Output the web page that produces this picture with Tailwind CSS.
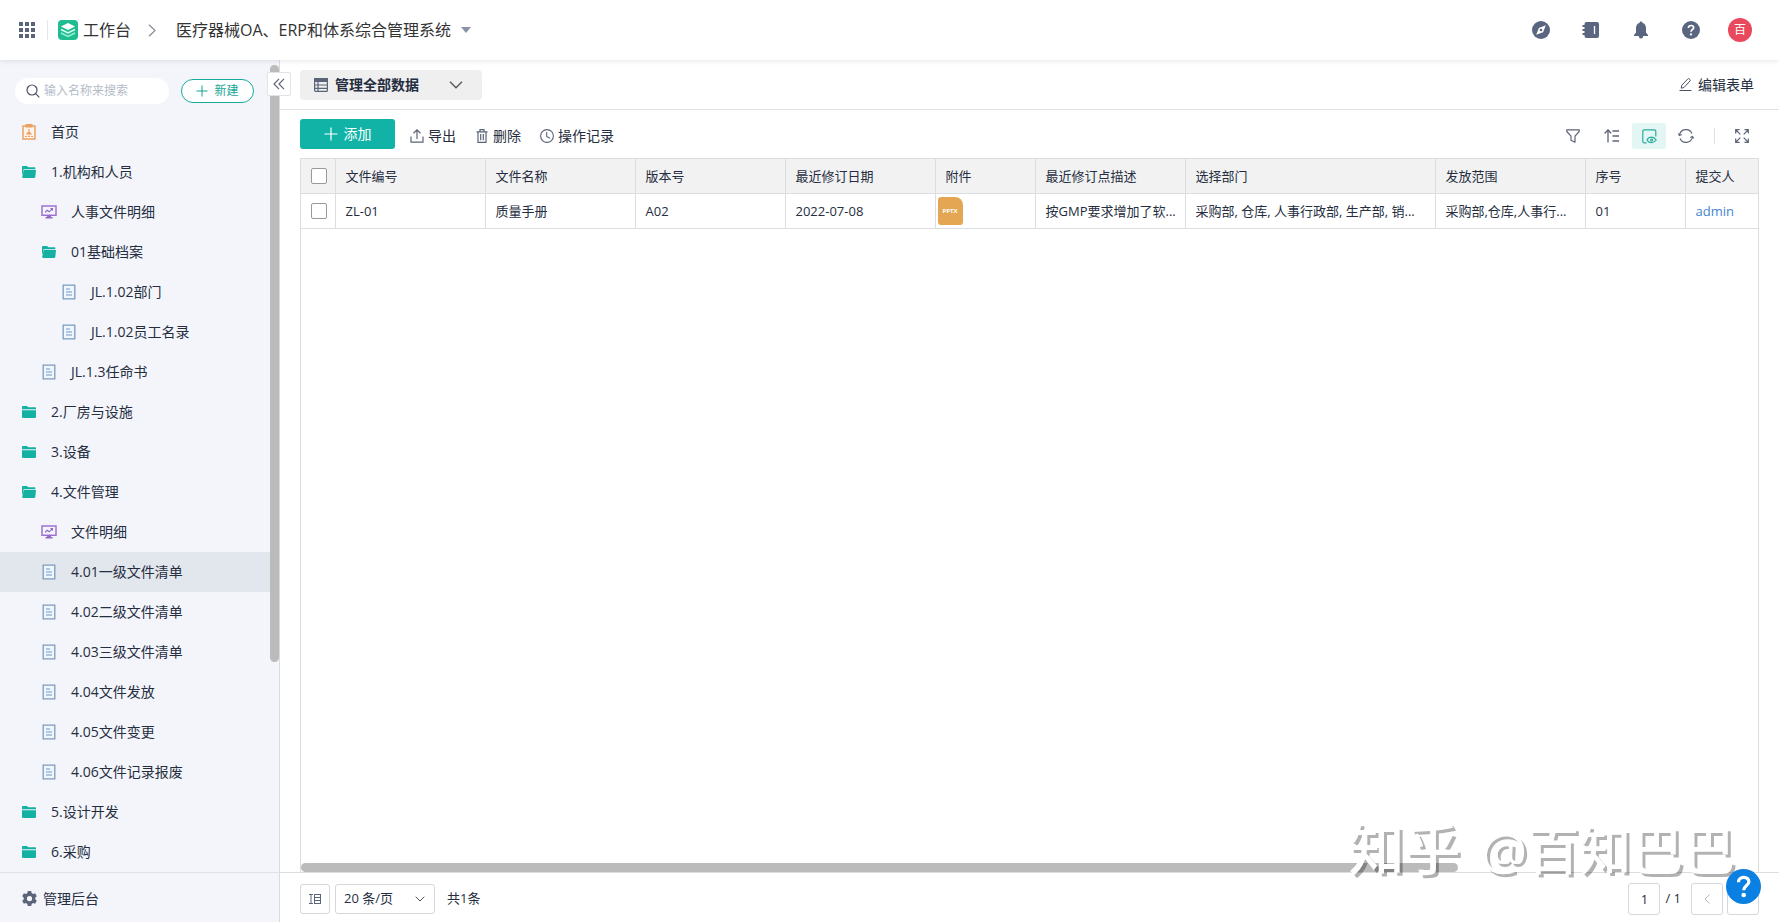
<!DOCTYPE html>
<html lang="zh-CN">
<head>
<meta charset="utf-8">
<title>医疗器械OA、ERP和体系综合管理系统</title>
<script src="https://cdn.jsdelivr.net/npm/@tailwindcss/browser@4"></script>
</head>
<body class="flex h-screen flex-col overflow-hidden bg-white font-['Open_Sans','Noto_Sans_CJK_SC',sans-serif] text-sm text-[#252d40]">

<svg class="hidden" aria-hidden="true">
  <symbol id="folder" viewBox="0 0 14 12"><path fill="#14b0a2" d="M0 1.2C0 .5.4 0 1 0h4l1.300 1.300h6.700c.6 0 1 .4 1 1v1H0zM0 4.300h14v6.500c0 .7-.4 1.200-1 1.200H1c-.6 0-1-.5-1-1.200z"/></symbol>
  <symbol id="folder-open" viewBox="0 0 14 12"><path fill="#14b0a2" d="M0 1.200C0 .5.4 0 1 0h4l1.300 1.300h6c.6 0 1 .4 1 1v1H1.500L.6 8 0 8z"/><path fill="#14b0a2" d="M1.700 4.100H14l-.7 6.700c0 .7-.4 1.200-1 1.200H1.200c-.6 0-1-.5-1-1.200z"/></symbol>
  <symbol id="doc" viewBox="0 0 14 16"><path fill="#eef5fb" stroke="#7d9cbd" stroke-width="1.300" d="M1.200 1.200h11.600v13.600H1.200z"/><path fill="none" stroke="#6f9cc9" stroke-width="1.200" d="M4 5h4M4 8h6M4 11h6"/></symbol>
  <symbol id="monitor" viewBox="0 0 16 14"><path fill="none" stroke="#a272d3" stroke-width="1.500" d="M1 1h14v9.200H1z"/><path fill="none" stroke="#8f63c4" stroke-width="1.100" d="M4 7.300l2.200-2 2 1.500 3-3M9.500 3.500h2v2"/><path fill="#9568cc" d="M6 10h4v2h1.500v1.500h-7V12H6z"/></symbol>
  <symbol id="plus" viewBox="0 0 14 14"><path fill="none" stroke="currentColor" stroke-width="1.200" d="M7 .5v13M.5 7h13"/></symbol>
  <symbol id="down" viewBox="0 0 14 8"><path fill="none" stroke="currentColor" stroke-width="1.300" d="M1 .8l6 6 6-6"/></symbol>
</svg>

<header class="relative z-10 flex h-15 shrink-0 items-center bg-white pr-[27px] pl-[19px] shadow-[0_1px_5px_rgba(0,0,0,0.1)]">
  <button aria-label="应用" class="mr-3"><svg class="size-4" viewBox="0 0 16 16" fill="#5b6478"><path d="M0 0h4v4H0zM6 0h4v4H6zM12 0h4v4h-4zM0 6h4v4H0zM6 6h4v4H6zM12 6h4v4h-4zM0 12h4v4H0zM6 12h4v4H6zM12 12h4v4h-4z"/></svg></button>
  <span class="mr-2.5 h-5 w-px bg-gray-200"></span>
  <svg class="mr-[5px] size-5" viewBox="0 0 20 20"><rect width="20" height="20" rx="4" fill="#20bd93"/><path fill="#fff" d="M10 3l7 3.500-7 3.500-7-3.500z"/><path fill="none" stroke="#d8fff1" stroke-width="1.500" d="M3 9.500l7 3.500 7-3.500"/><path fill="none" stroke="#9eeed4" stroke-width="1.500" d="M3 13l7 3.500 7-3.500"/></svg>
  <a href="#" class="text-base text-[#333]">工作台</a>
  <svg class="ml-[17px] mr-5 h-[13px] w-2" viewBox="0 0 8 13"><path fill="none" stroke="#8b909b" stroke-width="1.300" d="M1 .7l6 5.800-6 5.800"/></svg>
  <button class="flex items-center gap-2.5 text-base text-[#333]">医疗器械OA、ERP和体系综合管理系统
    <svg class="h-1.5 w-2.5" viewBox="0 0 10 6"><path fill="#8993a8" d="M0 0h10L5 6z"/></svg>
  </button>
  <div class="ml-auto flex items-center gap-8">
    <button aria-label="导航"><svg class="size-[18px]" viewBox="0 0 18 18"><circle cx="9" cy="9" r="9" fill="#5a6580"/><path fill="#fff" d="M13.800 4.200l-2.700 7-6.900 2.600 2.700-6.900z"/><circle cx="9" cy="9" r="1.300" fill="#5a6580"/></svg></button>
    <button aria-label="通讯录"><svg class="size-[18px]" viewBox="0 0 18 18"><rect x="2.500" y="1" width="14.500" height="16" rx="2" fill="#5a6580"/><path stroke="#5a6580" stroke-width="1.800" d="M.5 5h3M.5 9h3M.5 13h3"/><path stroke="#fff" stroke-width="1.300" d="M12.500 5v8"/></svg></button>
    <button aria-label="通知"><svg class="size-[18px]" viewBox="0 0 18 18"><path fill="#5a6580" d="M9 .5c.8 0 1.300.5 1.300 1.300C12.800 2.400 14 4.500 14 7v4.500l2 2.500v1H2v-1l2-2.500V7c0-2.500 1.200-4.600 3.700-5.200C7.700 1 8.200.5 9 .5zM6.800 15h4.400c0 1.700-1 2.500-2.200 2.500s-2.200-.8-2.200-2.500z"/></svg></button>
    <button aria-label="帮助"><svg class="size-[18px]" viewBox="0 0 18 18"><circle cx="9" cy="9" r="9" fill="#5a6580"/><path fill="none" stroke="#fff" stroke-width="1.700" d="M6.400 7c0-1.600 1.100-2.500 2.600-2.500s2.600.9 2.600 2.300c0 1.700-2.600 1.800-2.600 4"/><circle cx="9" cy="13.400" r="1.100" fill="#fff"/></svg></button>
    <button class="-ml-1 size-6 rounded-full bg-[#e9495c] text-xs text-white">百</button>
  </div>
</header>

<div class="flex min-h-0 flex-1">
  <aside class="relative flex w-70 shrink-0 flex-col border-r border-[#d9dbe0] bg-[#f3f5fa]">
    <div class="flex min-h-0 flex-1">
      <div class="min-w-0 flex-1 overflow-hidden">
        <div class="flex h-13 items-center gap-3 pt-2.5 pl-[15px]">
          <label class="flex h-[26px] w-[154px] items-center gap-1 rounded-full bg-white pl-[11px]">
            <svg class="size-3.5 shrink-0" viewBox="0 0 14 14" fill="none" stroke="#4b5263" stroke-width="1.200"><circle cx="6" cy="6" r="5"/><path d="M9.700 9.700l3.600 3.600"/></svg>
            <input type="text" aria-label="搜索" placeholder="输入名称来搜索" class="w-full min-w-0 bg-transparent text-xs outline-none placeholder:text-[#b4bcca]">
          </label>
          <button class="flex h-6 w-[73px] items-center justify-center gap-1.5 rounded-full border border-[#16ac9c] bg-white text-xs text-[#16a696]"><svg class="size-3"><use href="#plus"/></svg>新建</button>
        </div>
        <nav>
          <a href="#" class="flex h-10 items-center gap-[15px] pl-[22px]"><svg class="h-4 w-3.5" viewBox="0 0 14 16"><path fill="#fdf3ea" stroke="#eaa163" stroke-width="1.500" d="M1 2h12v13H1z"/><path fill="#eaa163" d="M3.500 0h7v3.500h-7z"/><path fill="none" stroke="#eaa163" stroke-width="1.100" d="M7 5v6.500M7 8l-2.500 2.500M7 8l2.500 2.500M3 12.500h2M6 12.500h2M9 12.500h2"/></svg>首页</a>
          <a href="#" class="flex h-10 items-center gap-[15px] pl-[22px]"><svg class="h-3 w-3.5"><use href="#folder-open"/></svg>1.机构和人员</a>
          <a href="#" class="flex h-10 items-center gap-3.5 pl-[41px]"><svg class="h-3.5 w-4"><use href="#monitor"/></svg>人事文件明细</a>
          <a href="#" class="flex h-10 items-center gap-[15px] pl-[42px]"><svg class="h-3 w-3.5"><use href="#folder-open"/></svg>01基础档案</a>
          <a href="#" class="flex h-10 items-center gap-[15px] pl-[62px]"><svg class="h-4 w-3.5"><use href="#doc"/></svg>JL.1.02部门</a>
          <a href="#" class="flex h-10 items-center gap-[15px] pl-[62px]"><svg class="h-4 w-3.5"><use href="#doc"/></svg>JL.1.02员工名录</a>
          <a href="#" class="flex h-10 items-center gap-[15px] pl-[42px]"><svg class="h-4 w-3.5"><use href="#doc"/></svg>JL.1.3任命书</a>
          <a href="#" class="flex h-10 items-center gap-[15px] pl-[22px]"><svg class="h-3 w-3.5"><use href="#folder"/></svg>2.厂房与设施</a>
          <a href="#" class="flex h-10 items-center gap-[15px] pl-[22px]"><svg class="h-3 w-3.5"><use href="#folder"/></svg>3.设备</a>
          <a href="#" class="flex h-10 items-center gap-[15px] pl-[22px]"><svg class="h-3 w-3.5"><use href="#folder-open"/></svg>4.文件管理</a>
          <a href="#" class="flex h-10 items-center gap-3.5 pl-[41px]"><svg class="h-3.5 w-4"><use href="#monitor"/></svg>文件明细</a>
          <a href="#" aria-current="page" class="flex h-10 items-center gap-[15px] bg-[#e2e6ed] pl-[42px]"><svg class="h-4 w-3.5"><use href="#doc"/></svg>4.01一级文件清单</a>
          <a href="#" class="flex h-10 items-center gap-[15px] pl-[42px]"><svg class="h-4 w-3.5"><use href="#doc"/></svg>4.02二级文件清单</a>
          <a href="#" class="flex h-10 items-center gap-[15px] pl-[42px]"><svg class="h-4 w-3.5"><use href="#doc"/></svg>4.03三级文件清单</a>
          <a href="#" class="flex h-10 items-center gap-[15px] pl-[42px]"><svg class="h-4 w-3.5"><use href="#doc"/></svg>4.04文件发放</a>
          <a href="#" class="flex h-10 items-center gap-[15px] pl-[42px]"><svg class="h-4 w-3.5"><use href="#doc"/></svg>4.05文件变更</a>
          <a href="#" class="flex h-10 items-center gap-[15px] pl-[42px]"><svg class="h-4 w-3.5"><use href="#doc"/></svg>4.06文件记录报废</a>
          <a href="#" class="flex h-10 items-center gap-[15px] pl-[22px]"><svg class="h-3 w-3.5"><use href="#folder"/></svg>5.设计开发</a>
          <a href="#" class="flex h-10 items-center gap-[15px] pl-[22px]"><svg class="h-3 w-3.5"><use href="#folder"/></svg>6.采购</a>
        </nav>
      </div>
      <div class="w-[9px] shrink-0 pt-[5px]"><div class="h-[74%] rounded-full bg-[#bbb]"></div></div>
    </div>
    <a href="#" class="flex h-[50px] shrink-0 items-center gap-1.5 border-t border-[#dfe1e6] pt-0.5 pl-[22px]">
      <svg class="size-[15px]" viewBox="0 0 16 16"><path fill="#5b6478" fill-rule="evenodd" d="M6.200 0h3.600l.5 2.200 1.500.9 2.200-.7 1.800 3.100L14.200 7v2l1.600 1.500-1.800 3.100-2.200-.7-1.500.9-.5 2.200H6.200l-.5-2.200-1.500-.9-2.200.7L.2 10.500 1.800 9V7L.2 5.500 2 2.400l2.200.7 1.500-.9zM8 5.200a2.800 2.800 0 100 5.600 2.800 2.800 0 000-5.600z"/></svg>管理后台</a>
    <button aria-label="收起侧栏" class="absolute top-3 -right-3 flex size-6 items-center justify-center rounded-xs border border-[#e2e3e6] bg-white"><svg class="size-3" viewBox="0 0 12 12"><path fill="none" stroke="#5f6675" stroke-width="1.200" d="M6 .8L1 6l5 5.200M11 .8L6 6l5 5.200"/></svg></button>
  </aside>

  <main class="flex min-w-0 flex-1 flex-col">
    <div class="flex h-[50px] shrink-0 items-center justify-between border-b border-[#dfe0e3] pr-[25px] pl-5">
      <button class="flex h-[30px] items-center rounded-sm bg-[#efefef] pr-[19px] pl-3.5 font-bold">
        <svg class="mr-[7px] size-3.5" viewBox="0 0 14 14"><rect x=".6" y=".6" width="12.800" height="12.800" rx="1" fill="none" stroke="#5b6478" stroke-width="1.200"/><path fill="#5b6478" d="M0 0h14v4H0z"/><path fill="none" stroke="#5b6478" stroke-width="1.200" d="M1 7h12M1 10.300h12M4 4v9"/></svg>管理全部数据
        <svg class="ml-[30px] h-2 w-3.5 text-[#555]"><use href="#down"/></svg>
      </button>
      <button class="flex items-center gap-1.5"><svg class="size-[13px]" viewBox="0 0 13 13" fill="none" stroke="#4b5263"><path d="M.5 12.500h12M2.200 10.200l.6-3L8.900.9c.4-.4.900-.4 1.300 0l.8.800c.4.4.4.9 0 1.300L5 9.500z"/></svg>编辑表单</button>
    </div>

    <div class="flex h-12 shrink-0 items-center pr-[30px] pl-5 pt-1">
      <button class="mr-[15px] mb-1 flex h-[30px] w-[95px] items-center justify-center gap-1.5 rounded-[3px] bg-[#11b3a6] text-white"><svg class="size-3.5"><use href="#plus"/></svg>添加</button>
      <button class="mr-5 flex items-center gap-1"><svg class="size-3.5" viewBox="0 0 14 14" fill="none" stroke="#5b6478" stroke-width="1.200"><path d="M1 7.500v5.700h12V7.500M7 10V1M3.500 4.300L7 .9l3.500 3.400"/></svg>导出</button>
      <button class="mr-[19px] flex items-center gap-[5px]"><svg class="h-3.5 w-3" viewBox="0 0 12 14" fill="none" stroke="#5b6478" stroke-width="1.200"><path d="M.5 2.800h11M4 2.500V.7h4v1.800M2 3v10.300h8V3M4.700 5v6.300M7.300 5v6.300"/></svg>删除</button>
      <button class="flex items-center gap-1"><svg class="size-3.5" viewBox="0 0 14 14" fill="none" stroke="#5b6478" stroke-width="1.100"><circle cx="7" cy="7" r="6.400"/><path d="M6.700 3v4.500l3.300 1.800"/></svg>操作记录</button>
      <div class="ml-auto flex items-center text-[#5b6478]">
        <button aria-label="筛选" class="mr-6"><svg class="size-3.5" viewBox="0 0 14 14" fill="none" stroke="currentColor" stroke-width="1.200" stroke-linejoin="round"><path d="M.8.800h12.400v1.700L9 7.200v6l-4-2V7.200L.8 2.500z"/></svg></button>
        <button aria-label="排序" class="mr-3"><svg class="h-3.5 w-4" viewBox="0 0 16 14" fill="none" stroke="currentColor" stroke-width="1.300"><path d="M4 13.500V1.200M.6 4.500L4 1l3.200 3.300M8.500 2H15M8.500 7H15M8.500 12H15"/></svg></button>
        <button aria-label="显示字段" class="mr-3 flex h-[26px] w-[34px] items-center justify-center rounded-xs bg-[#e3f6f4] text-[#2bab9d]"><svg class="size-[15px]" viewBox="0 0 15 15" fill="none" stroke="currentColor" stroke-width="1.200"><path d="M4.500 13.800H2.200c-.8 0-1.400-.6-1.400-1.400V2.200C.8 1.400 1.400.8 2.200.8h10.200c.8 0 1.400.6 1.400 1.400v5.300"/><path d="M5 11c1-1.800 2.500-2.800 4.500-2.800S13 9.200 14.200 11c-1.200 1.800-2.700 2.700-4.700 2.700S6 12.800 5 11z"/><circle cx="9.600" cy="11" r="1"/></svg></button>
        <button aria-label="刷新" class="mr-5"><svg class="size-4" viewBox="0 0 16 16" fill="none" stroke="currentColor" stroke-width="1.200"><path d="M1.500 7A6.600 6.600 0 0114 5.500M14.500 9A6.600 6.600 0 012 10.500"/><path d="M.2 5.500L1.500 7.500l2.200-1M15.800 10.500l-1.300-2-2.200 1"/></svg></button>
        <span class="mr-5 h-4 w-px bg-[#dfe1e6]"></span>
        <button aria-label="全屏"><svg class="size-3.5" viewBox="0 0 14 14" fill="none" stroke="currentColor" stroke-width="1.200"><path d="M.7 4.500V.7h3.800M9.500.7h3.800v3.800M13.300 9.500v3.800H9.500M4.500 13.300H.7V9.500M1 1l4.300 4.300M13 1L8.700 5.300M13 13L8.700 8.700M1 13l4.300-4.300"/></svg></button>
      </div>
    </div>

    <div class="mx-5 flex min-h-0 flex-1 flex-col justify-between border-x border-t border-[#dcdde0]">
      <table class="w-full table-fixed border-collapse text-left text-[13px] leading-5">
        <colgroup><col class="w-[34px]"><col class="w-[150px]"><col class="w-[150px]"><col class="w-[150px]"><col class="w-[150px]"><col class="w-[100px]"><col class="w-[150px]"><col class="w-[250px]"><col class="w-[150px]"><col class="w-[100px]"><col></colgroup>
        <thead class="bg-[#f2f2f3]">
          <tr class="h-[34px] border-b border-[#dcdde0] *:border-r *:border-[#dcdde0] *:pr-2 *:pl-2.5 *:font-normal *:whitespace-nowrap *:last:border-r-0">
            <th><input type="checkbox" aria-label="全选" class="block size-4 appearance-none rounded-xs border border-[#999] bg-white"></th>
            <th>文件编号</th><th>文件名称</th><th>版本号</th><th>最近修订日期</th><th>附件</th><th>最近修订点描述</th><th>选择部门</th><th>发放范围</th><th>序号</th><th>提交人</th>
          </tr>
        </thead>
        <tbody>
          <tr class="h-[35px] border-b border-[#dcdde0] *:border-r *:border-[#dcdde0] *:pr-2 *:pl-2.5 *:whitespace-nowrap *:last:border-r-0">
            <td><input type="checkbox" aria-label="选择 ZL-01" class="block size-4 appearance-none rounded-xs border border-[#999] bg-white"></td>
            <td>ZL-01</td><td>质量手册</td><td>A02</td><td>2022-07-08</td>
            <td><a href="#" aria-label="附件" class="-ml-2 flex h-7 w-[25px] items-center justify-center rounded-[3px] rounded-tr-lg bg-[#e5a653] text-[6px] font-bold text-white">PPTX</a></td>
            <td>按GMP要求增加了软...</td><td>采购部, 仓库, 人事行政部, 生产部, 销...</td><td>采购部,仓库,人事行...</td><td>01</td><td><a href="#" class="text-[#4285d0]">admin</a></td>
          </tr>
        </tbody>
      </table>
      <div class="h-[9px]"><div class="h-[9px] w-[79.4%] rounded-full bg-[#bbb]"></div></div>
    </div>

    <div class="flex h-[50px] shrink-0 items-center border-t border-[#dcdde0] px-5 pt-0.5 text-[13px]">
      <button aria-label="行高" class="mr-[5px] flex size-[30px] items-center justify-center rounded-[3px] border border-[#d5d7dc]"><svg class="h-3 w-3" viewBox="0 0 12 12" fill="none" stroke="#5b6478"><path d="M0 1.500h4M0 10.500h4M2 1.500v9M5.500 1v10M11.500 1v10M5.500 1.500h6M5.500 4.500h6M5.500 7.500h6M5.500 10.500h6"/></svg></button>
      <label class="relative mr-3 flex items-center"><select aria-label="每页条数" class="h-[30px] w-[100px] appearance-none rounded-[3px] border border-[#d5d7dc] pl-2 outline-none"><option>20 条/页</option></select><svg class="pointer-events-none absolute right-2.5 h-1.5 w-2.5 text-[#444]"><use href="#down"/></svg></label>
      <span>共1条</span>
      <input type="text" aria-label="页码" value="1" class="ml-auto h-8 w-8 rounded-[3px] border border-[#d5d7dc] text-center outline-none">
      <span class="mr-2.5 ml-[5px]">/ 1</span>
      <button aria-label="上一页" class="mr-1 flex size-8 items-center justify-center rounded-[3px] border border-[#d5d7dc]"><svg class="h-2.5 w-1.5" viewBox="0 0 6 10"><path fill="none" stroke="#b5b8bf" d="M5.500.5L1 5l4.500 4.500"/></svg></button>
      <button aria-label="下一页" class="flex size-8 items-center justify-center rounded-[3px] border border-[#d5d7dc]"></button>
    </div>
  </main>
</div>

<div class="pointer-events-none absolute right-11 bottom-[46px] z-20 flex items-baseline gap-5 leading-none font-medium text-white [text-shadow:3px_3px_0_rgba(0,0,0,0.3)]"><span class="text-[56px]">知乎</span><span class="text-[52px]">@百知巴巴</span></div>
<button aria-label="在线帮助" class="absolute right-[18px] bottom-[18px] z-30 size-[35px] rounded-full bg-[#0b80e3]"><svg class="size-full" viewBox="0 0 35 35"><path fill="none" stroke="#fff" stroke-width="3.200" d="M12.500 13.200c0-3.100 2.200-4.900 5.200-4.900s5.200 1.800 5.200 4.500c0 3.700-5.200 3.900-5.200 8.400"/><circle cx="17.700" cy="26" r="2.300" fill="#fff"/></svg></button>
</body>
</html>
